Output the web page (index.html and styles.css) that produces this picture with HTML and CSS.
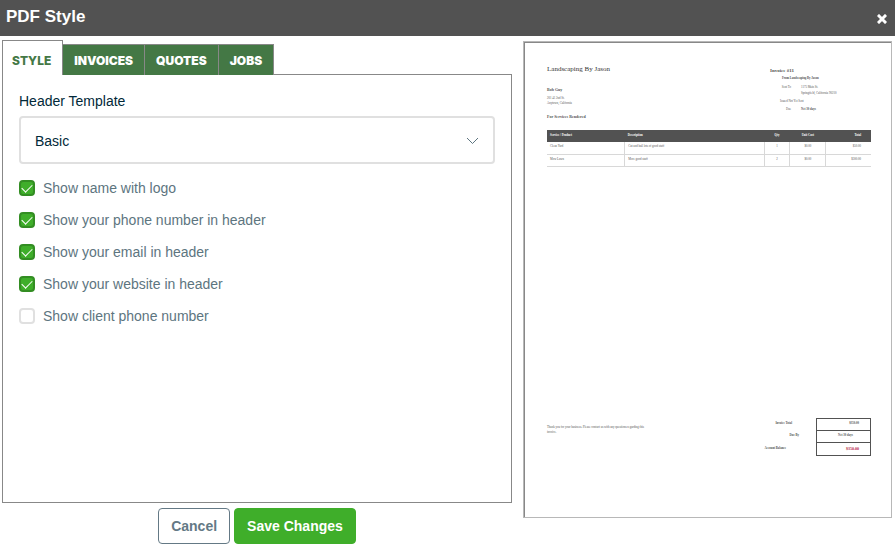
FILE: index.html
```html
<!DOCTYPE html>
<html lang="en">
<head>
    <meta charset="UTF-8">
    <meta name="viewport" content="width=device-width, initial-scale=1.0">
    <title>PDF Style</title>
    <link rel="stylesheet" href="styles.css">
</head>
<body>
    <header class="title-bar">
        <h1>PDF Style</h1>
        <button type="button" class="close" aria-label="Close">
            <svg width="10" height="10" viewBox="0 0 10 10"><path d="M2 2 L8 8 M8 2 L2 8" stroke="#fff" stroke-width="3" stroke-linecap="square"/></svg>
        </button>
    </header>
    <main>
        <form class="settings">
            <nav class="tabs">
                <button type="button" class="tab active">STYLE</button>
                <button type="button" class="tab">INVOICES</button>
                <button type="button" class="tab">QUOTES</button>
                <button type="button" class="tab">JOBS</button>
            </nav>
            <div class="panel">
                <label class="field-label" for="template">Header Template</label>
                <div class="select-wrap">
                    <select id="template" name="template">
                        <option>Basic</option>
                    </select>
                    <svg class="chevron" width="13" height="8" viewBox="0 0 13 8"><path d="M1 1 L6.5 6.5 L12 1" fill="none" stroke="#5d7580" stroke-width="1"/></svg>
                </div>
                <label class="check"><input type="checkbox" name="logo" checked>Show name with logo</label>
                <label class="check"><input type="checkbox" name="phone" checked>Show your phone number in header</label>
                <label class="check"><input type="checkbox" name="email" checked>Show your email in header</label>
                <label class="check"><input type="checkbox" name="website" checked>Show your website in header</label>
                <label class="check"><input type="checkbox" name="clientPhone">Show client phone number</label>
            </div>
            <div class="actions">
                <button type="button" class="btn cancel">Cancel</button>
                <button type="submit" class="btn save">Save Changes</button>
            </div>
        </form>

        <section class="preview">
            <div class="doc-top">
                <div class="doc-from">
                    <h2>Landscaping By Jason</h2>
                    <h4>Bob Guy</h4>
                    <p>201 41 2nd St.<br>Anytown, California</p>
                    <h4>For Services Rendered</h4>
                </div>
                <div class="doc-meta">
                    <h3>Invoice #11</h3>
                    <strong>From Landscaping By Jason</strong>
                    <dl>
                        <dt>Sent To</dt>
                        <dd>1175 Main St.<br>Springfield, California 90210</dd>
                        <dt class="wide">Issued Not Yet Sent</dt>
                        <dt>Due</dt>
                        <dd><b>Net 30 days</b></dd>
                    </dl>
                </div>
            </div>
            <table class="items">
                <thead>
                    <tr><th class="service">Service / Product</th><th class="description">Description</th><th class="qty">Qty</th><th class="cost">Unit Cost</th><th class="total">Total</th></tr>
                </thead>
                <tbody>
                    <tr><td>Clean Yard</td><td>Cut and bail lots of good stuff</td><td class="qty">1</td><td class="cost">$0.00</td><td class="total">$50.00</td></tr>
                    <tr><td>Mow Lawn</td><td>More good stuff</td><td class="qty">2</td><td class="cost">$0.00</td><td class="total">$300.00</td></tr>
                </tbody>
            </table>
            <footer class="doc-bottom">
                <p>Thank you for your business. Please contact us with any questions regarding this invoice.</p>
                <table class="totals">
                    <tr><th>Invoice Total</th><td class="amount">$350.00</td></tr>
                    <tr class="due"><th>Due By</th><td>Net 30 days</td></tr>
                    <tr class="balance"><th>Account Balance</th><td class="amount">$350.00</td></tr>
                </table>
            </footer>
        </section>
    </main>
</body>
</html>
```
FILE: styles.css
```css
* {
    box-sizing: border-box;
}

body {
    display: flex;
    flex-direction: column;
    min-height: 100vh;
    margin: 0;
    background: #fff;
    font-family: "Liberation Sans", Arial, sans-serif;
    font-size: 14px;
    color: #012939;
}

button, select {
    font-family: inherit;
    cursor: pointer;
}

.title-bar {
    display: flex;
    align-items: center;
    justify-content: space-between;
    height: 36px;
    padding: 0 8px 0 6px;
    background: #525252;
}

.title-bar h1 {
    margin: 0;
    padding-bottom: 2px;
    font-size: 17px;
    line-height: 20px;
    color: #fff;
}

.close {
    display: flex;
    padding: 2px 0 0;
    border: 0;
    background: none;
}

main {
    flex: 1;
    display: grid;
    grid-template-columns: 510fr 369fr;
    gap: 11px;
    padding: 4px 3px 10px 2px;
}

.settings {
    display: flex;
    flex-direction: column;
}

/* tabs */
.tabs {
    position: relative;
    display: flex;
    align-items: flex-end;
    margin-bottom: -1px;
}

.tab {
    height: 31px;
    padding: 0 11px;
    border: 1px solid #888;
    border-left: 0;
    border-bottom: 0;
    background: #447845;
    color: #fff;
    font-family: Inter, sans-serif;
    font-size: 12px;
    font-weight: 900;
}

.tab.active {
    height: 35px;
    padding: 4px 11px 0 9px;
    border-left: 1px solid #888;
    background: #fff;
    color: #447845;
    font-weight: 800;
}

.panel {
    flex: 1;
    padding: 16px;
    border: 1px solid #888;
}

.field-label {
    display: block;
    line-height: 20px;
}

.select-wrap {
    position: relative;
    margin: 5px 0 8px;
}

.select-wrap select {
    display: block;
    width: 100%;
    height: 48px;
    padding: 2px 14px 0;
    border: 2px solid #e0e0e0;
    border-radius: 4px;
    background: #fff;
    appearance: none;
    font-size: 14px;
    color: #012939;
}

.chevron {
    position: absolute;
    top: 21px;
    right: 16px;
    pointer-events: none;
}

.check {
    display: flex;
    align-items: center;
    gap: 8px;
    height: 32px;
    color: #5d7580;
}

.check input {
    width: 16px;
    height: 16px;
    margin: 0;
    border: 2px solid #e0e0e0;
    border-radius: 4px;
    background: #fff;
    appearance: none;
}

.check input:checked {
    display: grid;
    place-items: center;
    border-color: #338d23;
    background: #3fae2a;
}

.check input:checked::before {
    content: "";
    width: 9px;
    height: 5px;
    margin-bottom: 3px;
    border: solid #fff;
    border-width: 0 0 1px 1px;
    transform: rotate(-45deg);
}

.actions {
    display: flex;
    justify-content: center;
    gap: 4px;
    padding-top: 5px;
}

.btn {
    height: 36px;
    padding: 0 12px;
    border: 1px solid #647985;
    border-radius: 4px;
    background: #fff;
    color: #647985;
    font-size: 14px;
    font-weight: bold;
}

.btn.save {
    border-color: #3fae2a;
    background: #3fae2a;
    color: #fff;
}

/* invoice preview */
.preview {
    display: flex;
    flex-direction: column;
    align-self: start;
    aspect-ratio: 369 / 477;
    margin-top: 1px;
    padding: 23px 20px 61px 23px;
    border: 1px solid #b8b8b8;
    box-shadow: inset 1px 1px 0 #888;
    font-family: "Liberation Serif", serif;
    font-size: 3px;
    line-height: 5px;
    color: #555;
}

.preview h2, .preview h3, .preview h4, .preview p, .preview dl, .preview dd {
    margin: 0;
}

.doc-top {
    display: grid;
    grid-template-columns: 223fr 101fr;
    height: 65px;
}

.doc-from h2 {
    font-size: 7px;
    font-weight: normal;
    line-height: 8px;
    color: #333;
}

.doc-from h4 {
    padding: 14px 0 4px;
    font-size: 4px;
    line-height: 5px;
}

.doc-from p + h4 {
    padding-top: 8px;
}

.doc-meta h3 {
    padding-top: 3px;
    font-size: 5px;
    line-height: 5px;
}

.doc-meta strong {
    display: block;
    padding: 3px 12px;
}

.doc-meta dl {
    display: grid;
    grid-template-columns: 21px 1fr;
    column-gap: 10px;
    row-gap: 2px;
    line-height: 6px;
}

.doc-meta dt {
    text-align: right;
}

.doc-meta dt.wide {
    grid-column: 1 / -1;
    padding-left: 10px;
    text-align: left;
}

.items {
    width: 100%;
    border-collapse: collapse;
    table-layout: fixed;
}

.items th, .items td {
    height: 12px;
    padding: 0 3px 2px;
    text-align: left;
}

.items th {
    background: #525252;
    color: #fff;
}

.items td {
    border-bottom: 1px solid #d8d8d8;
    border-left: 1px solid #d8d8d8;
}

.items td:first-child {
    border-left: 0;
}

.items .service {
    width: 24%;
}

.items .description {
    width: 43%;
}

.items .qty {
    width: 8%;
    text-align: center;
}

.items .cost {
    width: 11%;
    text-align: center;
}

.items .total {
    width: 14%;
    padding-right: 10px;
    text-align: right;
}

.doc-bottom {
    display: flex;
    justify-content: space-between;
    margin-top: auto;
}

.doc-bottom p {
    width: 100px;
    padding-top: 7px;
}

.totals {
    border-collapse: collapse;
}

.totals th {
    padding: 0 24px 2px 0;
    text-align: right;
}

.totals .due th {
    padding-right: 17px;
}

.totals .balance th {
    padding-right: 30px;
}

.totals td {
    width: 54px;
    height: 12px;
    padding: 0 0 2px 4px;
    border: 1px solid #525252;
    text-align: center;
    font-weight: bold;
}

.totals .amount {
    padding-left: 0;
    padding-right: 11px;
    text-align: right;
}

.totals .balance td {
    height: 13px;
    font-size: 4px;
    color: #b5273c;
}
```
